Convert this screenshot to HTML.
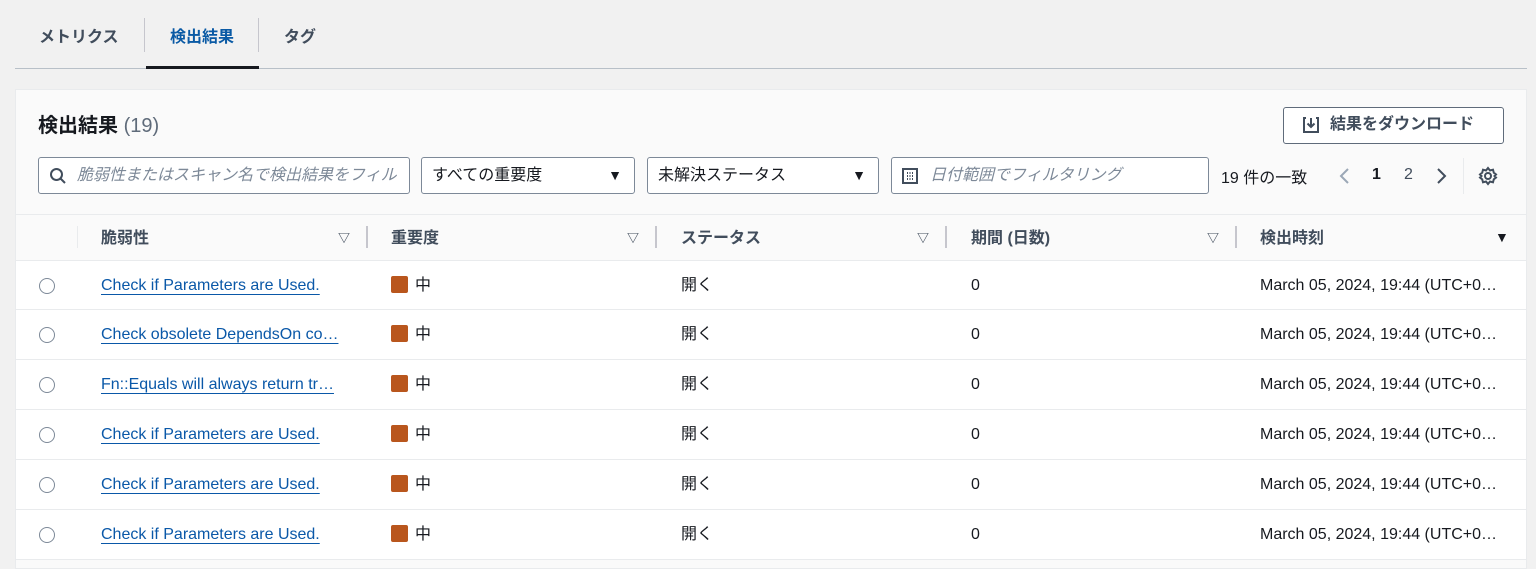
<!DOCTYPE html>
<html><head><meta charset="utf-8"><style>
*{box-sizing:border-box;margin:0;padding:0}
body{width:1536px;height:565px;overflow:hidden;background:#f1f1f1;font-family:"Liberation Sans","Noto Sans CJK JP",sans-serif;color:#16191f;position:relative}
.a{position:absolute;white-space:nowrap}
.tab{top:23px;font-size:16px;font-weight:bold;color:#414d5c}
.box{position:absolute;background:#fff;border:1px solid #7d8998;border-radius:3px;height:37px;top:157px;font-size:16px;line-height:35px;padding-left:10px}
.ph{color:#7d8998;font-style:italic}
.th{top:224px;font-size:16px;font-weight:bold;color:#414d5c}
.sep{position:absolute;top:226px;width:2px;height:22px;background:#c6c6cd}
.tri{position:absolute;top:229px;font-size:12px;font-weight:bold;color:#414d5c}
.row{position:absolute;left:16px;width:1510px;height:50px;background:#fff;border-bottom:1px solid #e9ebed}
.row span{position:absolute;top:0;line-height:49px;font-size:16px;white-space:nowrap}
.radio{position:absolute;left:23px;top:17px;width:16px;height:16px;border:1.5px solid #7d8998;border-radius:50%}
.lnk{color:#0a58a8;text-decoration:underline;text-underline-offset:4px;text-decoration-thickness:1px}
.sq{position:absolute;left:375px;top:15px;width:17px;height:17px;background:#b9561d;border-radius:2px}
</style></head><body>
<div class="a tab" style="left:39px">メトリクス</div>
<div class="a" style="left:144px;top:18px;width:1px;height:34px;background:#c6c6cd"></div>
<div class="a tab" style="left:170px;color:#0a5aa5">検出結果</div>
<div class="a" style="left:258px;top:18px;width:1px;height:34px;background:#c6c6cd"></div>
<div class="a tab" style="left:284px">タグ</div>
<div class="a" style="left:15px;top:68px;width:1512px;height:1px;background:#b8c0c8"></div>
<div class="a" style="left:146px;top:66px;width:113px;height:3px;background:#16191f"></div>

<div class="a" style="left:15px;top:89px;width:1512px;height:480px;background:#fafafa;border:1px solid #e9ebed"></div>
<div class="a" style="left:38px;top:109px;font-size:20px;font-weight:bold">検出結果 <span style="font-weight:normal;color:#5f6b7a">(19)</span></div>
<div class="a" style="left:1283px;top:107px;width:221px;height:37px;border:1px solid #5f6b7a;border-radius:3px;background:#fff;font-size:16px;font-weight:bold;color:#414d5c;line-height:33px;padding-left:46px">結果をダウンロード</div>
<svg class="a" style="left:1302px;top:116px" width="18" height="18" viewBox="0 0 18 18" fill="none" stroke="#414d5c" stroke-width="2"><path d="M4 2H2v14h14V2h-2M9 2v9M5.5 7.5L9 11l3.5-3.5"/></svg>

<div class="box" style="left:38px;width:372px;padding-left:38px"><span class="ph">脆弱性またはスキャン名で検出結果をフィル</span></div>
<svg class="a" style="left:49px;top:167px" width="18" height="18" viewBox="0 0 18 18" fill="none" stroke="#414d5c" stroke-width="2"><circle cx="7.5" cy="7.5" r="5.5"/><path d="M11.5 11.5L16 16"/></svg>
<div class="box" style="left:421px;width:214px">すべての重要度<span style="position:absolute;right:12px;font-size:14px">▼</span></div>
<div class="box" style="left:647px;width:232px">未解決ステータス<span style="position:absolute;right:12px;font-size:14px">▼</span></div>
<div class="box" style="left:891px;width:318px;padding-left:38px"><span class="ph">日付範囲でフィルタリング</span></div>
<svg class="a" style="left:902px;top:168px" width="16" height="16" viewBox="0 0 16 16" fill="none" stroke="#414d5c" stroke-width="2"><rect x="1" y="1" width="14" height="14"/><path d="M5 5h1M10 5h1M5 8h1M10 8h1M5 11h1M10 11h1M7.5 5h1M7.5 8h1M7.5 11h1"/></svg>
<div class="a" style="left:1221px;top:164px;font-size:16px">19 件の一致</div>
<svg class="a" style="left:1338px;top:167px" width="14" height="18" viewBox="0 0 14 18" fill="none" stroke="#9ba7b6" stroke-width="2"><path d="M10 2L3 9l7 7"/></svg>
<div class="a" style="left:1372px;top:166px;font-size:16px;font-weight:bold">1</div>
<div class="a" style="left:1404px;top:166px;font-size:16px;color:#414d5c">2</div>
<svg class="a" style="left:1434px;top:167px" width="14" height="18" viewBox="0 0 14 18" fill="none" stroke="#414d5c" stroke-width="2"><path d="M4 2l7 7-7 7"/></svg>
<div class="a" style="left:1463px;top:158px;width:1px;height:36px;background:#e9ebed"></div>
<svg class="a" style="left:1478px;top:166px" width="20" height="20" viewBox="0 0 20 20" fill="none" stroke="#414d5c" stroke-width="2"><circle cx="10" cy="10" r="3"/><path d="M10 2l2 2.5 3-.8.8 3L18 8.5 16.5 10 18 11.5l-2.2 1.8-.8 3-3-.8L10 18l-2-2.5-3 .8-.8-3L2 11.5 3.5 10 2 8.5l2.2-1.8.8-3 3 .8z"/></svg>

<div class="a" style="left:16px;top:214px;width:1510px;height:1px;background:#e9ebed"></div>
<div class="a" style="left:77px;top:226px;width:1px;height:22px;background:#e9ebed"></div>
<div class="a th" style="left:101px">脆弱性</div><div class="tri" style="left:338px">▽</div><div class="sep" style="left:366px"></div>
<div class="a th" style="left:391px">重要度</div><div class="tri" style="left:627px">▽</div><div class="sep" style="left:655px"></div>
<div class="a th" style="left:681px">ステータス</div><div class="tri" style="left:917px">▽</div><div class="sep" style="left:945px"></div>
<div class="a th" style="left:971px">期間 (日数)</div><div class="tri" style="left:1207px">▽</div><div class="sep" style="left:1235px"></div>
<div class="a th" style="left:1260px">検出時刻</div><div class="tri" style="left:1495px;font-size:14px;color:#16191f">▼</div>

<div class="row" style="top:260px;border-top:1px solid #e9ebed"><div class="radio"></div><span class="lnk" style="left:85px">Check if Parameters are Used.</span><div class="sq"></div><span style="left:399px">中</span><span style="left:665px">開く</span><span style="left:955px">0</span><span style="left:1244px">March 05, 2024, 19:44 (UTC+0…</span></div>
<div class="row" style="top:310px"><div class="radio"></div><span class="lnk" style="left:85px">Check obsolete DependsOn co…</span><div class="sq"></div><span style="left:399px">中</span><span style="left:665px">開く</span><span style="left:955px">0</span><span style="left:1244px">March 05, 2024, 19:44 (UTC+0…</span></div>
<div class="row" style="top:360px"><div class="radio"></div><span class="lnk" style="left:85px">Fn::Equals will always return tr…</span><div class="sq"></div><span style="left:399px">中</span><span style="left:665px">開く</span><span style="left:955px">0</span><span style="left:1244px">March 05, 2024, 19:44 (UTC+0…</span></div>
<div class="row" style="top:410px"><div class="radio"></div><span class="lnk" style="left:85px">Check if Parameters are Used.</span><div class="sq"></div><span style="left:399px">中</span><span style="left:665px">開く</span><span style="left:955px">0</span><span style="left:1244px">March 05, 2024, 19:44 (UTC+0…</span></div>
<div class="row" style="top:460px"><div class="radio"></div><span class="lnk" style="left:85px">Check if Parameters are Used.</span><div class="sq"></div><span style="left:399px">中</span><span style="left:665px">開く</span><span style="left:955px">0</span><span style="left:1244px">March 05, 2024, 19:44 (UTC+0…</span></div>
<div class="row" style="top:510px"><div class="radio"></div><span class="lnk" style="left:85px">Check if Parameters are Used.</span><div class="sq"></div><span style="left:399px">中</span><span style="left:665px">開く</span><span style="left:955px">0</span><span style="left:1244px">March 05, 2024, 19:44 (UTC+0…</span></div>
</body></html>
